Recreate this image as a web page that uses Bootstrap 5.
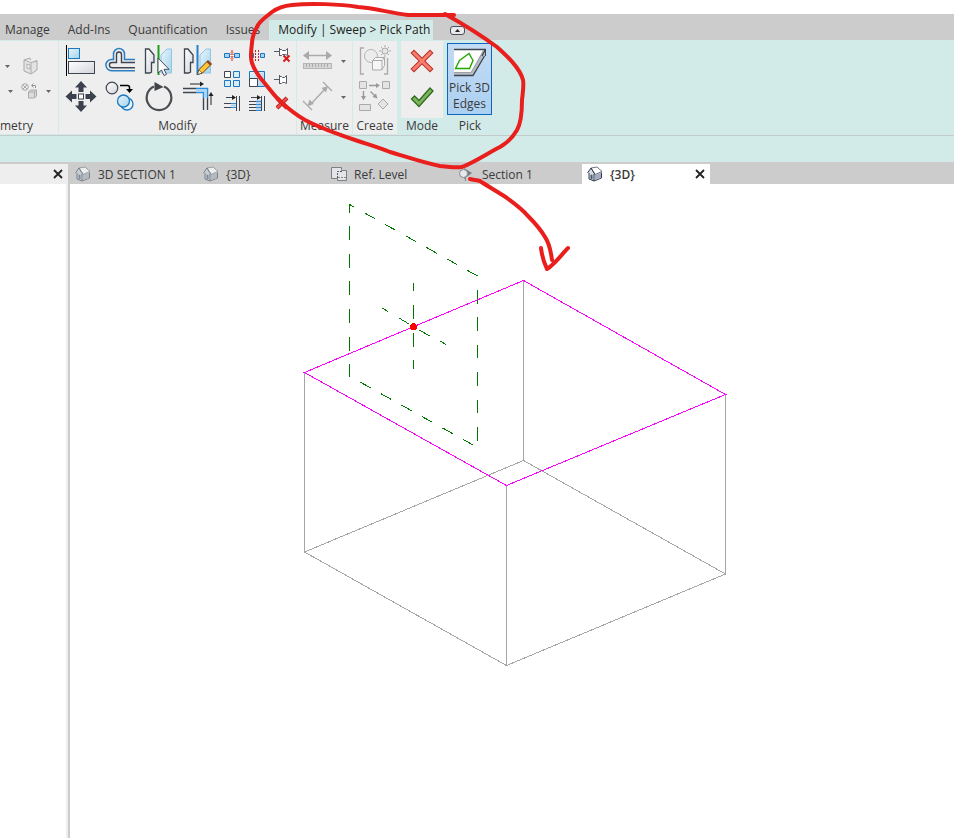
<!DOCTYPE html>
<html lang="en">
<head>
<meta charset="utf-8">
<meta name="viewport" content="width=device-width, initial-scale=1">
<title>Modify | Sweep &gt; Pick Path</title>
<link rel="stylesheet" href="https://cdn.jsdelivr.net/npm/bootstrap@5.3.0/dist/css/bootstrap.min.css">
<style>
  :root { --teal: #d3ebe8; --bar: #ccc; --face: #eee; --ink: #3a3a3a; }
  body { font-family: "Open Sans", "Noto Sans", sans-serif; font-size: 12px; line-height: 16px; color: var(--ink); background: #fff; }
  button { font: inherit; color: inherit; background: none; border: 0; padding: 0; }
  svg { display: block; flex: none; }
  .ribbon-tabs { background: var(--bar); height: 26px; margin-top: 14px; padding-top: 6px; }
  .ribbon-tabs a { color: var(--ink); text-decoration: none; padding: 2px 9px; height: 20px; white-space: nowrap; }
  .ribbon-tabs a:first-child { padding-left: 5px; }
  .ribbon-tabs a.current { background: var(--teal); color: #222; padding-right: 3px; }
  .ribbon { background: var(--teal); height: 96px; padding: 1px 0; border-bottom: 1px solid #c4cccb; }
  .panel { background: var(--face); margin-right: 1px; }
  .panel-body { height: 77px; padding-top: 4px; }
  .panel-title { font-size: 12px; line-height: 16px; text-align: center; margin: 0; font-weight: 400; }
  .w-geo { width: 58px; } .w-mod { width: 237px; } .w-mea { width: 55px; } .w-cre { width: 44px; } .w-mode { width: 42px; } .w-pick { width: 46px; }
  .big-tools { display: grid; grid-template-columns: repeat(4, 32px); gap: 4px 7px; padding-left: 6px; }
  .small-tools { display: grid; grid-template-columns: repeat(3, 16px); grid-auto-rows: 16px; gap: 8px 9px; padding: 2px 0 0 10px; }
  .teal-title { margin-left: 3px; }
  .teal-title .panel-title { background: var(--teal); }
  .w-pick .panel-body { padding-top: 2px; }
  .pick-btn { background: linear-gradient(#c3dbf4, #acd0f1); border: 1px solid #0c66c2; width: 45px; height: 72px; padding-top: 4px; }
  .pick-btn span { display: block; line-height: 16px; }
  .options-bar { background: var(--teal); height: 26px; }
  .view-row { background: var(--bar); height: 22px; padding-top: 2px; }
  .dock-head { background: var(--face); width: 68px; margin-right: 2px; }
  .view-tab { width: 128px; height: 20px; padding-left: 5px; gap: 7px; }
  .view-tab a { color: var(--ink); text-decoration: none; line-height: 18px; padding-top: 2px; }
  .view-tab.current { background: #fff; }
  .dock { width: 70px; border-right: 2px solid var(--bar); box-shadow: inset -2px 0 var(--face); }
  .markup { left: 0; top: 0; pointer-events: none; }
</style>
<script src="https://cdn.jsdelivr.net/npm/bootstrap@5.3.0/dist/js/bootstrap.bundle.min.js"></script>
</head>
<body class="position-relative d-flex flex-column min-vh-100 overflow-hidden">

<svg width="0" height="0" class="position-absolute" aria-hidden="true">
  <defs>
    <linearGradient id="gw" x1="0" y1="0" x2="1" y2="1"><stop offset="0" stop-color="#fff"/><stop offset="1" stop-color="#d2d4dc"/></linearGradient>
    <linearGradient id="gb" x1="0" y1="0" x2="1" y2="1"><stop offset="0" stop-color="#e8f5fb"/><stop offset="1" stop-color="#a4d3ec"/></linearGradient>
    <symbol id="house" viewBox="0 0 16 16">
      <path d="M.5 6.500 4 2 10 1 15.500 5 14.500 6.500V12L7 15 2 13V7z" fill="#c9cdd4"/>
      <path d="M4 2 10 1 15 5.500 8 8.500z" fill="#eceef0" stroke="#858b94" stroke-width=".8"/>
      <path d="M.5 7 4 2 8 8.500M2 7v6l5 2V8M14.500 6.500V12L7 15" fill="none" stroke="#7b818b"/><path d="M3.500 8.500v4L5.500 13.500V9z" fill="#7f8996"/><path d="M8 9 14 7v5l-6 2z" fill="#b4b9c3"/>
    </symbol>
    <symbol id="house-on" viewBox="0 0 16 16">
      <path d="M.5 6.500 4 2 10 1 15.500 5 14.500 6.500V12L7 15 2 13V7z" fill="#d6dde8"/>
      <path d="M4 2 10 1 15 5.500 8 8.500z" fill="#fff" stroke="#4d5866" stroke-width=".8"/>
      <path d="M.5 7 4 2 8 8.500M2 7v6l5 2V8M14.500 6.500V12L7 15" fill="none" stroke="#303a49"/><path d="M3.500 8.500v4L5.500 13.500V9z" fill="#46566c"/><path d="M8 9 14 7v5l-6 2z" fill="#a3adbf"/>
    </symbol>
    <symbol id="caret" viewBox="0 0 5 3"><path d="M0 0h5L2.500 3z" fill="#666"/></symbol>
  </defs>
</svg>

<nav class="ribbon-tabs d-flex" aria-label="Ribbon">
  <a href="#">Manage</a><a href="#">Add-Ins</a><a href="#">Quantification</a><a href="#">Issues</a><a href="#" class="current" aria-current="page">Modify | Sweep &gt; Pick Path</a>
  <button type="button" class="align-self-start ms-3 pt-1" aria-label="Minimize ribbon">
    <svg width="16" height="12" viewBox="-1 -1 16 12"><rect x=".5" y="1.500" width="14" height="8" rx="2.500" fill="#e9e9ee" stroke="#4a4f5c"/><path d="M5 7h5L7.500 4z" fill="#222"/></svg>
  </button>
</nav>

<div class="ribbon d-flex">
  <section class="panel w-geo">
    <div class="panel-body d-flex flex-column gap-2 pt-3">
      <div class="d-flex align-items-center gap-2"><svg class="ms-1" width="7" height="3"><use href="#caret"/></svg>
        <button type="button" class="ms-1" aria-label="Cut geometry"><svg width="16" height="18" viewBox="0 0 16 18"><path d="M1 3 7 1l1 3 3 1 3-1.500V13l-6 4-7-3z" fill="#e3e3e3" stroke="#aaa"/><path d="M1 3 8 5.500 14 3.500M8 5.500V17M4 7l3 1v4l-3-1z" fill="#f3f3f3" stroke="#b0b0b0"/></svg></button></div>
      <div class="d-flex align-items-center ps-1 gap-2"><svg class="ms-1" width="5" height="3"><use href="#caret"/></svg>
        <button type="button" aria-label="Join geometry"><svg width="17" height="16" viewBox="0 0 17 16"><circle cx="4" cy="4" r="3.300" fill="#eee" stroke="#aaa"/><path d="M2 2l4 4M6 2 2 6" stroke="#aaa"/><path d="M11 2.500h3.500V5M12.500.500l-2 2 2 2" fill="none" stroke="#999"/><path d="M7.500 9 9.500 7h6v6l-2 2h-6zM7.500 9h6v6M13.500 9l2-2" fill="#ddd" stroke="#aaa"/></svg></button><svg width="5" height="3"><use href="#caret"/></svg></div>
    </div>
    <h2 class="panel-title text-start">metry</h2>
  </section>

  <section class="panel w-mod">
    <div class="panel-body d-flex align-items-start">
      <div class="big-tools">
        <button type="button" aria-label="Align"><svg width="32" height="32" viewBox="0 0 32 32"><path d="M1.500 0v31" stroke="#000"/><rect x="3.500" y="3.500" width="11" height="10" fill="url(#gb)" stroke="#1a77c2"/><rect x="3.500" y="16.500" width="26" height="12" fill="url(#gw)" stroke="#3e4450"/></svg></button>
        <button type="button" aria-label="Offset"><svg width="32" height="32" viewBox="0 0 32 32" fill="none"><path d="M31 14.500H20.500V9a5.500 5.500 0 0 0-11 0V14.500H7.500a5.600 5.600 0 0 0 0 11.200H31" stroke="#2b7fc5" stroke-width="1.500"/><path d="M31 17.500H17.500V9.500a2.500 2.500 0 0 0-5 0v8H8a2.500 2.500 0 0 0 0 5.200H31" stroke="#3e4450" stroke-width="1.400"/></svg></button>
        <button type="button" aria-label="Mirror - Pick Axis"><svg width="32" height="32" viewBox="0 0 32 32"><path d="M2.500 4H6l5 6v7.500H8.500V27l-2 1h-4z" fill="url(#gw)" stroke="#3e4450" stroke-width="1.300"/><path d="M28.500 4H24l-6 6v18h10.500z" fill="url(#gb)" stroke="#8fc6e6"/><path d="M15.500 0v30" stroke="#1b9e1b" stroke-width="2"/><path d="M15 13v15l3.500-3 2.500 5.500 2.500-1.200-2.500-5h5z" fill="#fff" stroke="#444b58"/></svg></button>
        <button type="button" aria-label="Mirror - Draw Axis"><svg width="32" height="32" viewBox="0 0 32 32"><path d="M2.500 4H6l5 6v7.500H8.500V27l-2 1h-4z" fill="url(#gw)" stroke="#3e4450" stroke-width="1.300"/><path d="M28.500 4H24l-6 6v18h10.500z" fill="url(#gb)" stroke="#8fc6e6"/><path d="M15.500 0v30" stroke="#2380d0" stroke-width="2"/><path d="M15.500 29.500l1.500-5L26 15.500l3.500 3.500-9 9z" fill="#ffc537" stroke="#58431c"/><path d="M24.500 17 26 15.500l3.500 3.500-1.500 1.500z" fill="#9b3d1e"/><path d="M15.500 29.500 17 25l3 3z" fill="#fff0cf" stroke="#58431c" stroke-width=".6"/></svg></button>
        <button type="button" aria-label="Move"><svg width="32" height="32" viewBox="0 0 32 32" fill="#3b424e"><path d="M16 0l6 6.500h-3.500V11h-5V6.500H10zM16 31l6-6.500h-3.500V20h-5v4.500H10zM.5 15.500 7 9.500V13h4.500v5H7v3.500zM31.500 15.500 25 9.500V13h-4.500v5H25v3.500z"/><rect x="13.500" y="13" width="5" height="5" fill="#fff" stroke="#3b424e"/></svg></button>
        <button type="button" aria-label="Copy"><svg width="32" height="32" viewBox="0 0 32 32"><circle cx="8" cy="7" r="5.800" fill="url(#gw)" stroke="#3e4450" stroke-width="1.200"/><path d="M16 4.500h7.500q2 0 2 2V10" fill="none" stroke="#000" stroke-width="1.500"/><path d="M22 8h7l-3.500 4z"/><circle cx="23" cy="23" r="6" fill="#e8f5fb" stroke="#1a77c2" stroke-width="1.300"/><circle cx="19.500" cy="20" r="6" fill="url(#gb)" stroke="#1a77c2" stroke-width="1.300"/></svg></button>
        <button type="button" aria-label="Rotate"><svg width="32" height="32" viewBox="0 0 32 32"><path d="M21 5.500a12.300 12.300 0 1 1-10 0" fill="none" stroke="#4a4d52" stroke-width="2.200"/><path d="M11.500 1v9L20.500 6z" fill="#3f4247"/></svg></button>
        <button type="button" aria-label="Trim/Extend to Corner"><svg width="32" height="32" viewBox="0 0 32 32" fill="none"><path d="M1 7.500h13M1 11.500h13M21.500 17v12M25.500 17v12" stroke="#3e4450" stroke-width="1.400"/><path d="M14 7.500h11.500V17M14 11.500h7.500V17" stroke="#2a8de0" stroke-width="1.500"/><path d="M14 9.500h9.500V17" stroke="#a8d4f3" stroke-width="2.500"/><path d="M8 3h12M29 24V13" stroke="#222"/><path d="M18 .500 22 3l-4 2.500zM26.500 15 29 11l2.500 4z" fill="#222"/></svg></button>
      </div>
      <div class="small-tools">
        <button type="button" aria-label="Split Element"><svg width="16" height="16" viewBox="0 0 16 16"><path d="M.5 6.500h5v4h-5zM10.500 6.500h5v4h-5z" fill="#a8d4ee" stroke="#1a77c2"/><path d="M8 3v11" stroke="#c22" stroke-dasharray="2 1"/><path d="M7 5v7M9 5v7" stroke="#d55" stroke-dasharray="1 1"/></svg></button>
        <button type="button" aria-label="Split with Gap"><svg width="16" height="16" viewBox="0 0 16 16"><path d="M.5 6.500h4v4h-4zM11.500 6.500h4v4h-4z" fill="#a8d4ee" stroke="#1a77c2"/><path d="M6.500 3v11M9.500 3v11" stroke="#c22" stroke-dasharray="2 1"/></svg></button>
        <button type="button" aria-label="Unpin"><svg width="18" height="18" viewBox="0 0 18 18"><path d="M0 4.500h5M5.500 1v8M5.500 2.500h2l1 1h3l2-2v7l-2-1h-3l-1 1h-2z" fill="#fff" stroke="#555b66"/><path d="M9.500 8.500l6 6M15.500 8.500l-6 6" stroke="#d51a1a" stroke-width="2"/></svg></button>
        <button type="button" aria-label="Array"><svg width="16" height="16" viewBox="0 0 16 16" fill="#d6ecf8" stroke="#1a77c2"><path d="M.5.500h6v6h-6z" fill="#fff" stroke="#3e4450"/><path d="M9.500.500h6v6h-6zM.5 9.500h6v6h-6zM9.500 9.500h6v6h-6z"/></svg></button>
        <button type="button" aria-label="Scale"><svg width="16" height="16" viewBox="0 0 16 16"><path d="M.5.500h15v15H.5z" fill="url(#gb)" stroke="#1a77c2"/><path d="M.5 7.500h8v8h-8z" fill="#fff" stroke="#3e4450"/></svg></button>
        <button type="button" aria-label="Pin"><svg width="16" height="16" viewBox="0 0 16 16"><path d="M0 8.500h5M5.500 4v9M5.500 5.500h2l1 1h2l2-2v8l-2-1h-2l-1 1h-2z" fill="#fff" stroke="#555b66"/></svg></button>
        <button type="button" aria-label="Trim/Extend Single Element"><svg width="16" height="16" viewBox="0 0 16 16"><path d="M2 2.500h7M0 8.500h7M0 12.500h7M12.500 1v15M15.500 1v15" stroke="#3e4450"/><path d="M8 0l4 2.500L8 5z" fill="#222"/><path d="M7 8.500h5M7 12.500h5" stroke="#2a8de0"/><path d="M7 10.500h5" stroke="#a8d4f3" stroke-width="2"/></svg></button>
        <button type="button" aria-label="Trim/Extend Multiple Elements"><svg width="16" height="16" viewBox="0 0 16 16"><path d="M2 2.500h7M0 6.500h7M0 9.500h7M0 12.500h7M0 15.500h7M12.500 1v15M15.500 1v15" stroke="#3e4450"/><path d="M8 0l4 2.500L8 5z" fill="#222"/><path d="M7 6.500h5M7 9.500h5M7 12.500h5M7 15.500h5" stroke="#2a8de0" stroke-width="1.500"/></svg></button>
        <button type="button" aria-label="Delete"><svg width="16" height="16" viewBox="0 0 16 16"><path d="M3 3l10 10M13 3 3 13" stroke="#a31515" stroke-width="4"/><path d="M3 3l10 10M13 3 3 13" stroke="#ee4a42" stroke-width="2.500"/></svg></button>
      </div>
    </div>
    <h2 class="panel-title">Modify</h2>
  </section>

  <section class="panel w-mea">
    <div class="panel-body d-flex flex-column gap-1 ps-1">
      <div class="d-flex align-items-center gap-2"><button type="button" aria-label="Measure"><svg width="32" height="32" viewBox="0 0 32 32"><path d="M5 10.500h22" stroke="#aaa" stroke-width="1.500"/><path d="M2 10.500 8 6v9zM31 10.500 25 6v9z" fill="#aaa"/><rect x="2.500" y="18.500" width="28" height="5" fill="#d6d6d6" stroke="#b5b5b5"/><path d="M5 20.500h24" stroke="#aaa" stroke-width="3" stroke-dasharray="1 2"/></svg></button><svg width="5" height="3"><use href="#caret"/></svg></div>
      <div class="d-flex align-items-center gap-2"><button type="button" aria-label="Aligned dimension"><svg width="32" height="32" viewBox="0 0 32 32"><path d="M9 24 24 8M2 20l9 9M22 1l9 9" stroke="#aaa" stroke-width="1.300"/><path d="M6.500 25l2-6.500 4.500 4.500zM27 5l-2 6.500-4.500-4.500z" fill="#aaa"/></svg></button><svg width="5" height="3"><use href="#caret"/></svg></div>
    </div>
    <h2 class="panel-title">Measure</h2>
  </section>

  <section class="panel w-cre">
    <div class="panel-body d-flex flex-column align-items-center gap-1">
      <button type="button" aria-label="Create Group"><svg width="32" height="32" viewBox="0 0 32 32"><path d="M5 3H1.500v26H5M25 29h3.500V13" fill="none" stroke="#aaa" stroke-width="1.300"/><circle cx="12" cy="11" r="6.500" fill="#ececec" stroke="#b5b5b5"/><path d="M13.500 15.500l3-3h9v8l-3 4.500h-9zM13.500 15.500h9.500V25M23 15.500l2.500-3" fill="#f6f6f6" stroke="#aaa"/><g stroke="#aaa" fill="none"><circle cx="26" cy="6" r="3" fill="#e6e6e6"/><path d="M26 0v2M26 10v2M20 6h2M30 6h2M22 2l1.500 1.500M30 2l-1.500 1.500M22 10l1.500-1.500M30 10l-1.500-1.500"/></g></svg></button>
      <button type="button" aria-label="Create Similar"><svg width="32" height="32" viewBox="0 0 32 32" stroke="#aaa" fill="#e4e4e4"><path d="M.5.500h7v7h-7zM23.500.500h7v7h-7zM.5 23.500h11v6H.5zM24 18l5 5-5 5-5-5z"/><path d="M10 4.500h7M4.500 10v6M11.500 10.500l5 5" stroke="#999" stroke-width="1.400"/><path d="M17 2l4 2.500L17 7zM2 15h5l-2.500 4.500zM18.500 17.500l-5-1.500 3.500-3.500z" fill="#999" stroke="none"/></svg></button>
    </div>
    <h2 class="panel-title">Create</h2>
  </section>

  <section class="panel teal-title w-mode">
    <div class="panel-body d-flex flex-column align-items-center gap-1">
      <button type="button" aria-label="Cancel Edit Mode"><svg width="32" height="32" viewBox="0 0 32 32" stroke-linecap="square"><path d="M8 8l16 16M24 8 8 24" stroke="#b92f25" stroke-width="5"/><path d="M8 8l16 16M24 8 8 24" stroke="#fa7d70" stroke-width="3"/></svg></button>
      <button type="button" aria-label="Finish Edit Mode"><svg width="32" height="32" viewBox="0 0 32 32"><path d="M5.500 18l3-3 4.500 4.500L24 7l3 3L13 25.500z" fill="#7cb55c" stroke="#2f6b1f" stroke-width="1.300"/></svg></button>
    </div>
    <h2 class="panel-title">Mode</h2>
  </section>

  <section class="panel teal-title w-pick bg-transparent">
    <div class="panel-body">
      <button type="button" class="pick-btn d-flex flex-column align-items-center" aria-pressed="true">
        <svg width="32" height="32" viewBox="0 0 32 32"><path d="M0 1h30L17 25H0z" fill="#fdfdfd"/><path d="M0 24.500h17L29 2l1.500 6L19 28H0z" fill="#b8bcc4"/><path d="M0 1.500h31.500V8M31 2 28 8M0 27.500h19L30.500 8" fill="none" stroke="#3e4450" stroke-width="1.300"/><path d="M0 24.500h17L29.500 3" fill="none" stroke="#8a9099" stroke-width=".8"/><path d="M1.500 20.500l4-8L15 5.500l4 7-3.500 8z" fill="#fff" stroke="#22a800" stroke-width="1.400"/></svg>
        <span>Pick 3D</span><span>Edges</span>
      </button>
    </div>
    <h2 class="panel-title">Pick</h2>
  </section>
</div>

<div class="options-bar"></div>

<div class="view-row d-flex">
  <div class="dock-head d-flex align-items-center justify-content-end pe-1">
    <button type="button" aria-label="Close palette"><svg width="12" height="12" viewBox="0 0 12 12"><path d="M2 2l8 8M10 2l-8 8" stroke="#222" stroke-width="1.800"/></svg></button>
  </div>
  <nav class="d-flex" aria-label="Views">
    <div class="view-tab d-flex align-items-center"><svg width="16" height="16"><use href="#house"/></svg><a href="#">3D SECTION 1</a></div>
    <div class="view-tab d-flex align-items-center"><svg width="16" height="16"><use href="#house"/></svg><a href="#">{3D}</a></div>
    <div class="view-tab d-flex align-items-center"><svg width="16" height="16" viewBox="0 0 16 16"><path d="M.5 1.500h10v3h5v10h-9v-2h-6z" fill="#e3e5e8" stroke="#7b8087"/><path d="M6.500 12V5.500H12" fill="none" stroke="#555" stroke-dasharray="2 1"/><path d="M7 11.500h8" stroke="#888" stroke-dasharray="2 1"/></svg><a href="#">Ref. Level</a></div>
    <div class="view-tab d-flex align-items-center"><svg width="16" height="16" viewBox="0 0 16 16"><path d="M5 2l8 5-8 6z" fill="#777d86"/><circle cx="4.500" cy="7.500" r="4" fill="#e6e8ec" stroke="#858a92"/><path d="M6.500 11v4" stroke="#858a92"/></svg><a href="#">Section 1</a></div>
    <div class="view-tab current d-flex align-items-center"><svg width="16" height="16"><use href="#house-on"/></svg><a href="#" class="fw-semibold" aria-current="page">{3D}</a>
      <button type="button" class="ms-auto me-1" aria-label="Close view"><svg width="12" height="12" viewBox="0 0 12 12"><path d="M2 2l8 8M10 2l-8 8" stroke="#222" stroke-width="1.800"/></svg></button></div>
  </nav>
</div>

<main class="d-flex flex-grow-1">
  <aside class="dock flex-shrink-0" aria-label="Palette"></aside>
  <svg width="670" height="490" viewBox="70 184 670 490" fill="none" shape-rendering="crispEdges" role="img" aria-label="3D view of a box with its top edges picked">
    <path d="M304.500 372.500V552L506.500 665.500 725.500 574V394.500M506.500 485.500V665.500M523.500 281V460.500M304.500 552 523.500 460.500 725.500 574" stroke="#a6a6a6"/>
    <g stroke="#007800">
      <path d="M349.500 204.500V377" stroke-dasharray="14 13.600" stroke-dashoffset="6"/>
      <path d="M477.500 290V446" stroke-dasharray="13.500 13.900"/>
      <path d="M413.500 283v8M413.500 305v14M413.500 333v14M413.500 360v9"/>
      <path d="M349.500 204.500 477.500 276" stroke-dasharray="12 11.600" stroke-dashoffset="6.500"/>
      <path d="M382 308l6 3.500M399 318l10 6M419 330l11 6M440 341l6 3.500"/>
      <path d="M360 382 474 445.500" stroke-dasharray="12 11.600"/>
    </g>
    <path d="M304.500 372.500 523.500 280.500 725.500 394.500 506.500 485.500z" stroke="#f0f"/>
    <circle cx="413.500" cy="326.500" r="3.500" fill="#f00"/>
  </svg>
</main>

<svg class="markup position-absolute" width="600" height="280" viewBox="0 0 600 280" fill="none" stroke="#e81f1c" stroke-width="4" stroke-linecap="round" stroke-linejoin="round" aria-hidden="true">
  <path d="M454 15C438 15 422 15 408 15C390 13 375 8 358 7C340 4 310 3 292 5C282 6 276 9 272 12C266 17 261 20 258 25C254 32 252 38 252 43C251 51 250 58 252 63C254 69 258 75 262 80C269 88 275 97 282 103C290 110 298 116 305 120C322 129 340 135 358 141C370 145 380 148 390 152C407 157 424 163 440 166C448 167 456 168 462 167C475 162 488 153 500 147C507 143 513 137 517 130C521 123 522 110 522 100C523 92 524 84 523 80C520 68 507 56 497 47C482 36 463 24 445 14"/>
  <path d="M470 179C474 180 477 180 480 181C489 187 498 192 507 198C515 204 522 209 527 215C534 222 541 230 545 237C550 244 551 253 552 260M541 248C542 256 544 263 547 269C555 264 562 254 568 248"/>
</svg>
</body>
</html>
